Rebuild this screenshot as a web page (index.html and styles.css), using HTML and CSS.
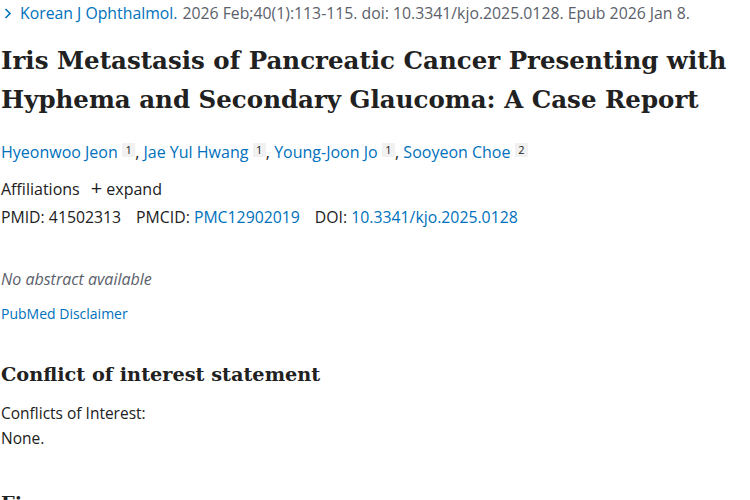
FILE: index.html
```html
<!DOCTYPE html>
<html lang="en">
<head>
<meta charset="utf-8">
<title>Iris Metastasis of Pancreatic Cancer - PubMed</title>
<link rel="stylesheet" href="styles.css">
</head>
<body>
<main class="article">
  <div class="citation">
    <button class="journal-toggle" type="button">
      <svg class="chevron" width="8" height="11" viewBox="0 0 8 11" aria-hidden="true"><path d="M1.5 1 L6 5.5 L1.5 10" fill="none" stroke="#0071bc" stroke-width="1.6"/></svg>
      <span class="journal">Korean J Ophthalmol.</span>
    </button>
    <span class="cit-text">2026 Feb;40(1):113-115. doi: 10.3341/kjo.2025.0128. Epub 2026 Jan 8.</span>
  </div>

  <h1 class="title">Iris Metastasis of Pancreatic Cancer Presenting with Hyphema and Secondary Glaucoma: A Case Report</h1>

  <div class="authors">
    <span class="author"><a href="#">Hyeonwoo Jeon</a> <sup class="aff">1</sup></span><span class="comma">,</span>
    <span class="author"><a href="#">Jae Yul Hwang</a> <sup class="aff">1</sup></span><span class="comma">,</span>
    <span class="author"><a href="#">Young-Joon Jo</a> <sup class="aff">1</sup></span><span class="comma">,</span>
    <span class="author"><a href="#">Sooyeon Choe</a> <sup class="aff">2</sup></span>
  </div>

  <div class="affiliations">
    <span>Affiliations</span>
    <button class="expand" type="button"><span class="plus">+</span> expand</button>
  </div>

  <ul class="identifiers">
    <li>PMID: <strong>41502313</strong></li>
    <li>PMCID: <a href="#">PMC12902019</a></li>
    <li>DOI: <a href="#">10.3341/kjo.2025.0128</a></li>
  </ul>

  <p class="empty-abstract">No abstract available</p>
  <a class="disclaimer" href="#">PubMed Disclaimer</a>

  <h2 class="section-title">Conflict of interest statement</h2>
  <p class="coi">Conflicts of Interest:<br>None.</p>

  <h2 class="section-title figures">Figures</h2>
</main>
</body>
</html>
```

FILE: styles.css
```css
html, body {
  margin: 0;
  padding: 0;
  background: #ffffff;
}

body {
  font-family: "Open Sans", "Noto Sans", sans-serif;
  font-size: 16px;
  color: #212121;
}

a {
  color: #0071bc;
  text-decoration: none;
}

.article {
  padding-left: 1px;
}

.citation {
  display: flex;
  align-items: center;
  gap: 5px;
  height: 26px;
  line-height: 26px;
  font-size: 15.8px;
  color: #5b616b;
  white-space: nowrap;
}

.journal-toggle {
  display: flex;
  align-items: center;
  gap: 8px;
  padding: 0 0 0 3px;
  border: 0;
  background: none;
  font: inherit;
  color: #0071bc;
}

.title {
  margin: 15px 0 0;
  font-family: "DejaVu Serif", serif;
  font-weight: 700;
  font-size: 24.5px;
  line-height: 39px;
  color: #212121;
}

.authors {
  margin-top: 20px;
  line-height: 26px;
  white-space: nowrap;
}

.author a {
  color: #0071bc;
}

.aff {
  display: inline-block;
  vertical-align: 4px;
  font-size: 11px;
  line-height: 14px;
  padding: 0 3.5px;
  background: #f1f1f1;
  color: #212121;
}

.comma {
  color: #212121;
}

.affiliations {
  margin-top: 10px;
  line-height: 26px;
  display: flex;
  align-items: center;
  gap: 11px;
}

.expand {
  border: 0;
  background: none;
  padding: 0;
  font: inherit;
  color: #212121;
}

.plus {
  font-size: 20px;
}

.identifiers {
  list-style: none;
  margin: 2px 0 0;
  padding: 0;
  display: flex;
  gap: 15px;
  line-height: 26px;
  font-size: 15.8px;
}

.identifiers strong {
  font-weight: 400;
}

.empty-abstract {
  margin: 36px 0 0;
  line-height: 26px;
  font-style: italic;
  color: #5b616b;
}

.disclaimer {
  display: block;
  margin-top: 11px;
  font-size: 14px;
  line-height: 22px;
}

.section-title {
  margin: 35px 0 0;
  font-family: "DejaVu Serif", serif;
  font-weight: 700;
  font-size: 19.3px;
  line-height: 30px;
  color: #212121;
}

.coi {
  margin: 11px 0 0;
  font-size: 15.5px;
  line-height: 25px;
}

.figures {
  margin-top: 38px;
}
```
